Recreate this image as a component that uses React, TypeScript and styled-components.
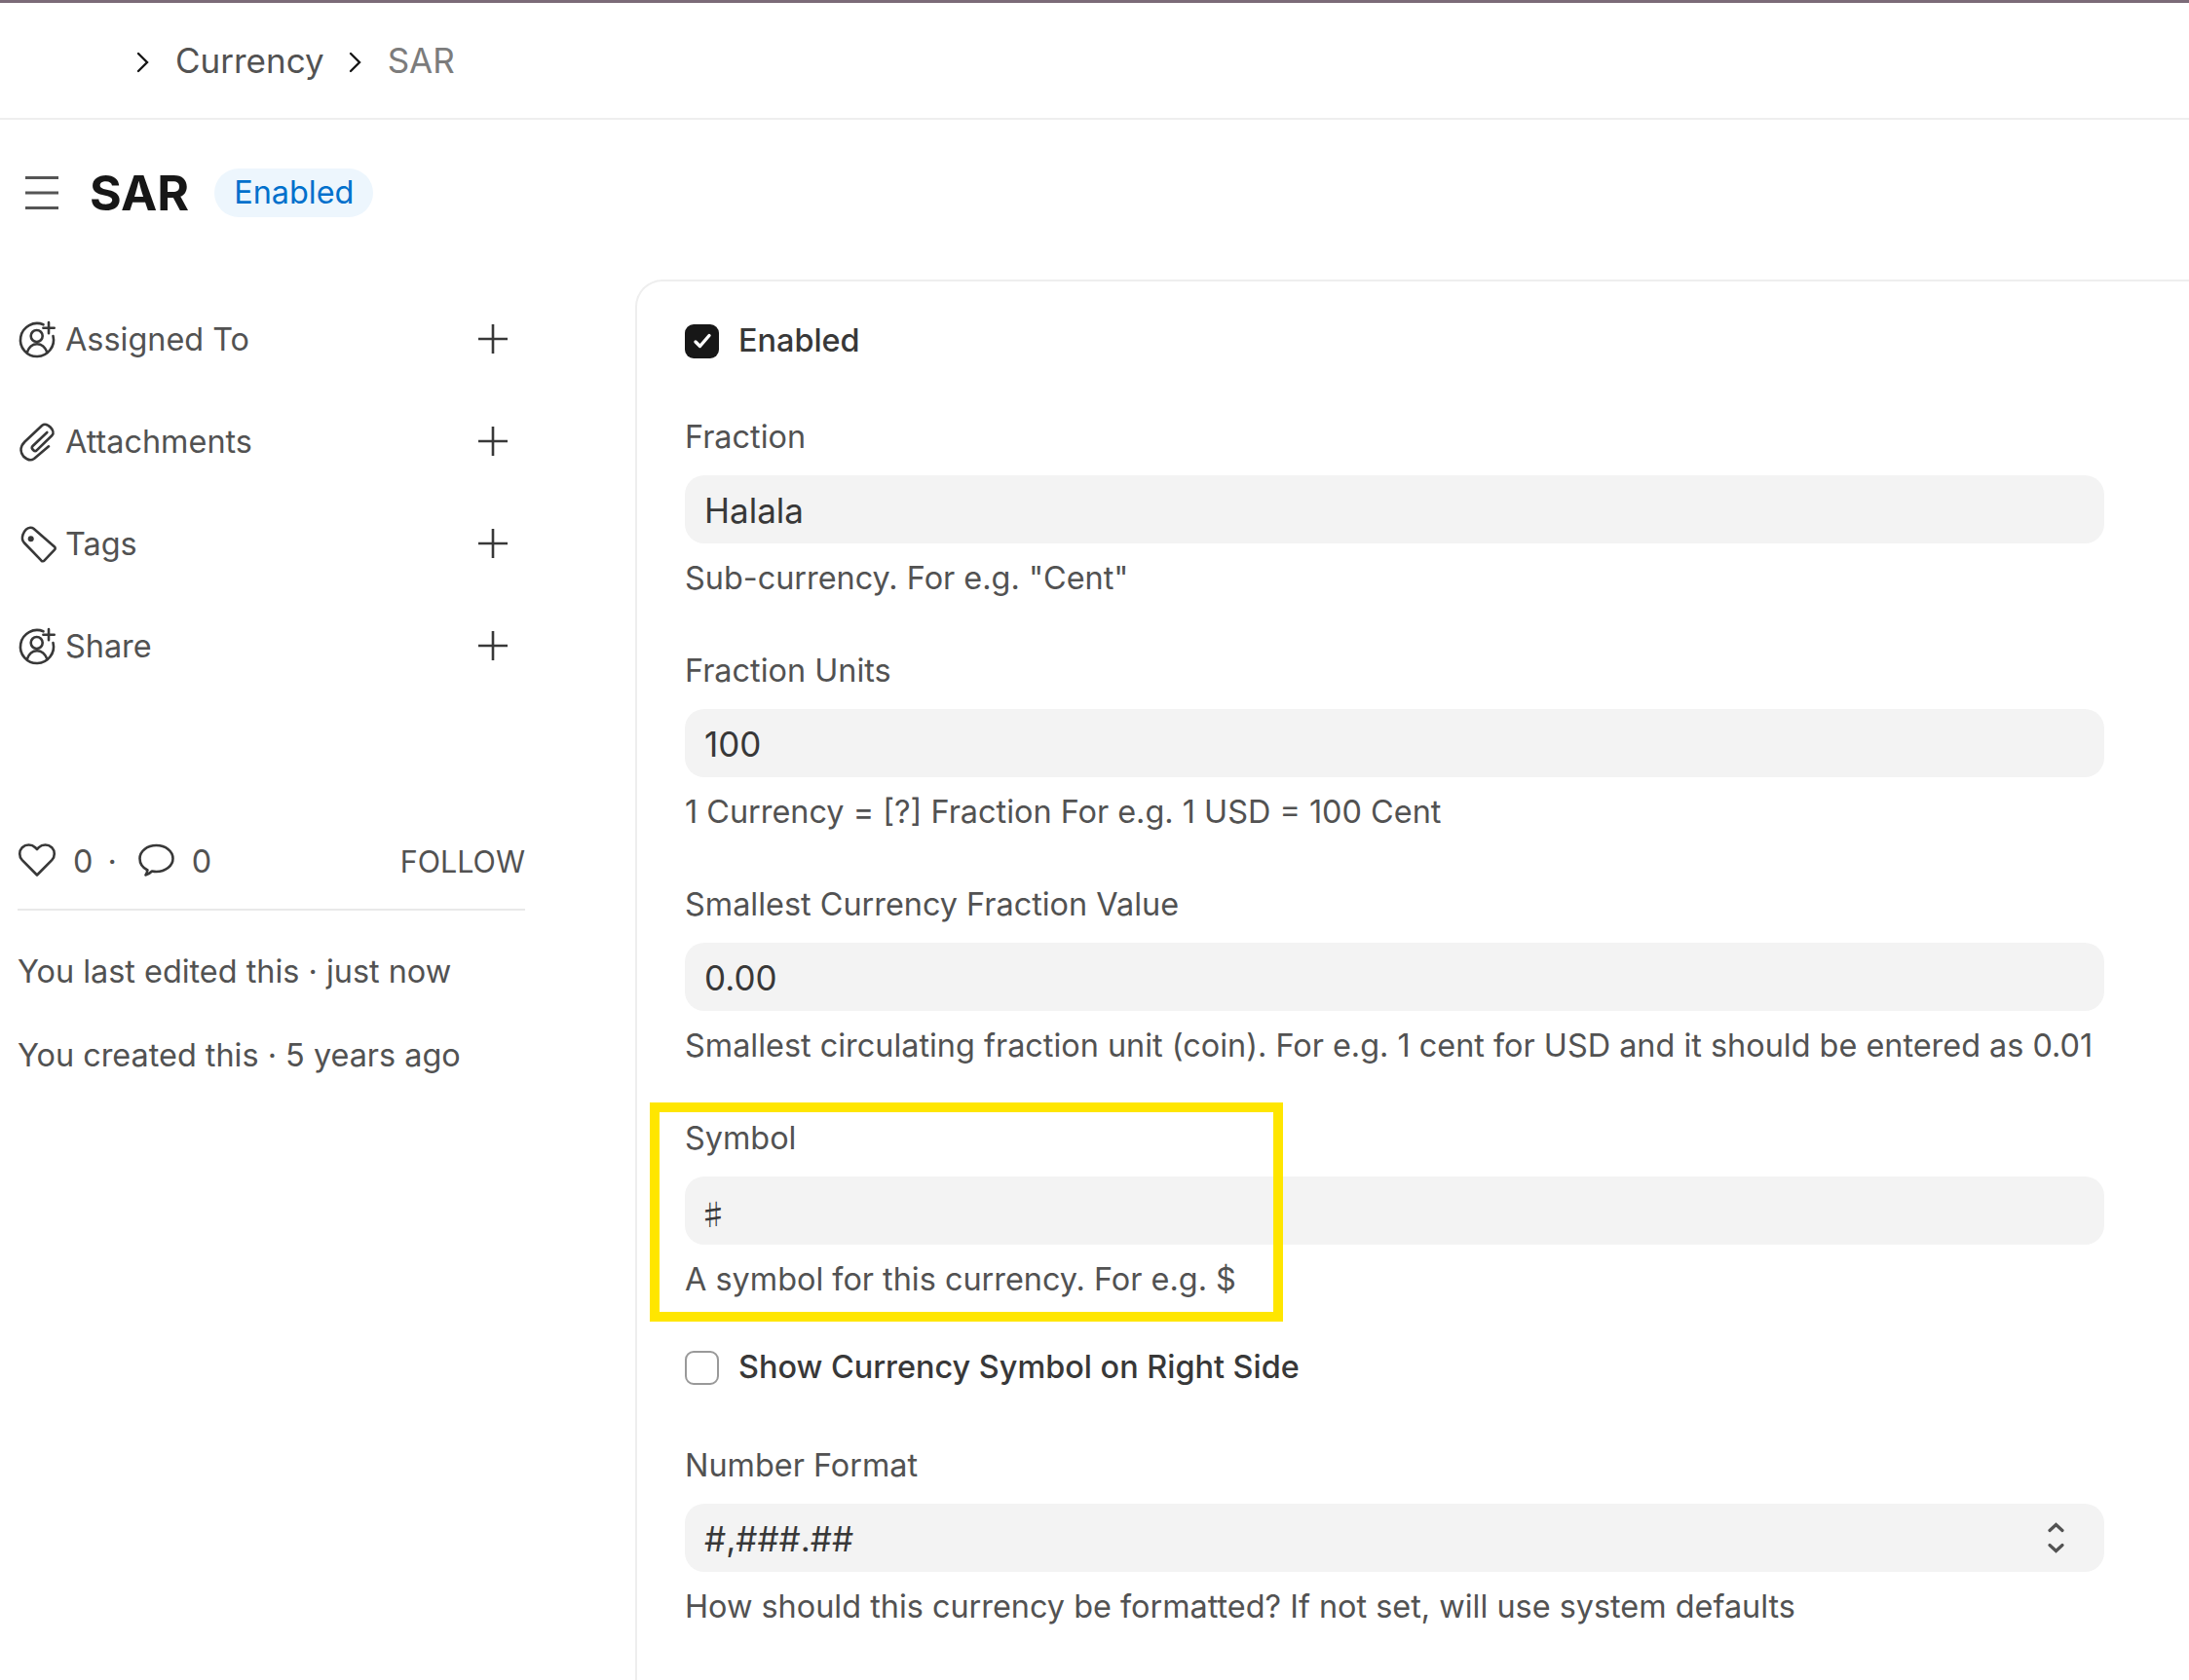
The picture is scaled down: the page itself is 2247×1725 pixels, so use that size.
import React from "react";
import styled, { createGlobalStyle } from "styled-components";

const GlobalStyle = createGlobalStyle`
  html, body {
    margin: 0;
    padding: 0;
    background: #fff;
  }
  * {
    box-sizing: border-box;
  }
`;

const Page = styled.div`
  color: #525252;
  display: flex;
  flex-direction: column;
  font-family: Inter, "Noto Sans", sans-serif;
  font-size: 32.4px;
  height: 1725px;
  line-height: 40px;
  overflow: hidden;
  width: 2247px;
`;

const TopStripe = styled.div`
  background: #7b6b78;
  flex: none;
  height: 3px;
`;

const Navbar = styled.header`
  align-items: center;
  border-bottom: 2px solid #eeeeee;
  display: flex;
  flex: none;
  height: 120px;
  padding-left: 140px;
`;

const Crumb = styled.span<{ $current?: boolean }>`
  color: ${(p) => (p.$current ? "#7c7c7c" : "#525252")};
  font-size: 35px;
  margin-left: 26px;
  margin-right: 25px;
`;

const Chevron = styled.svg`
  fill: none;
  flex: none;
  height: 22px;
  margin-top: 3px;
  stroke: #171717;
  stroke-linecap: round;
  stroke-width: 2.4;
  width: 14px;
`;

const TitleRow = styled.div`
  align-items: center;
  display: flex;
  flex: none;
  height: 50px;
  margin-top: 50px;
  padding-left: 26px;
`;

const Hamburger = styled.svg`
  fill: none;
  flex: none;
  height: 36px;
  stroke: #555555;
  stroke-width: 3;
  width: 34px;
`;

const Title = styled.h1`
  color: #171717;
  font-size: 50px;
  font-weight: 700;
  line-height: 50px;
  margin: 0 26px 0 32px;
`;

const Badge = styled.span`
  background: #edf6fd;
  border-radius: 25px;
  color: #0070cc;
  height: 50px;
  line-height: 50px;
  padding: 0 20px;
`;

const Main = styled.div`
  display: flex;
  flex: 1;
  margin-top: 64px;
  min-height: 0;
`;

const Sidebar = styled.aside`
  flex: none;
  padding-left: 18px;
  padding-top: 41px;
  width: 652px;
`;

const SideRows = styled.div`
  display: flex;
  flex-direction: column;
  gap: 65px;
  width: 503px;
`;

const SideRow = styled.div`
  align-items: center;
  display: flex;
  height: 40px;
  padding-left: 2px;
`;

const SideLabel = styled.span`
  flex: 1;
  margin-left: 11px;
  padding-top: 2px;
`;

const SideIcon = styled.svg<{ $w?: number; $h?: number }>`
  fill: none;
  flex: none;
  height: ${(p) => p.$h || 36}px;
  overflow: visible;
  stroke: #383838;
  stroke-linecap: round;
  stroke-linejoin: round;
  stroke-width: 2.6;
  width: ${(p) => p.$w || 36}px;
`;

const PlusIcon = styled.svg`
  fill: none;
  flex: none;
  height: 30px;
  stroke: #383838;
  stroke-width: 2.6;
  width: 30px;
`;

const LikeRow = styled.div`
  align-items: center;
  border-bottom: 2px solid #e9e9e9;
  display: flex;
  height: 72px;
  margin-top: 180px;
  padding-bottom: 30px;
  padding-left: 1px;
  width: 521px;
`;

const Count = styled.span`
  margin-left: 18px;
  padding-top: 3px;
`;

const Dot = styled.span`
  margin: 0 22px 0 15px;
  padding-top: 3px;
`;

const Follow = styled.span`
  font-size: 30.5px;
  margin-left: auto;
  padding-top: 3px;
`;

const Meta = styled.p<{ $gap: number }>`
  height: 40px;
  line-height: 42px;
  margin: ${(p) => p.$gap}px 0 0;
`;

const Card = styled.main`
  border-left: 2px solid #eeeeee;
  border-top: 2px solid #eeeeee;
  border-top-left-radius: 28px;
  flex: 1;
  padding: 41px 87px 0 49px;
`;

const CheckRow = styled.div<{ $top?: number; $bottom: number }>`
  align-items: center;
  color: #383838;
  display: flex;
  font-weight: 500;
  height: 40px;
  margin-bottom: ${(p) => p.$bottom}px;
  margin-top: ${(p) => p.$top || 0}px;
`;

const CheckBox = styled.span<{ $checked?: boolean }>`
  align-items: center;
  background: ${(p) => (p.$checked ? "#171717" : "#fff")};
  border: ${(p) => (p.$checked ? "none" : "2px solid #999999")};
  border-radius: 9px;
  display: flex;
  flex: none;
  height: 35px;
  justify-content: center;
  margin-right: 20px;
  width: 35px;
`;

const Field = styled.div`
  position: relative;
  & + & {
    margin-top: 55px;
  }
`;

const Label = styled.div`
  height: 40px;
  line-height: 42px;
  margin-bottom: 20px;
`;

const Control = styled.div`
  align-items: center;
  background: #f3f3f3;
  border-radius: 20px;
  color: #383838;
  display: flex;
  font-size: 35px;
  height: 70px;
  justify-content: space-between;
  padding: 1px 41px 0 20px;
`;

const Help = styled.div`
  height: 40px;
  line-height: 42px;
  margin-top: 15px;
  white-space: nowrap;
`;

const Highlight = styled.div`
  border: 10px solid #ffe600;
  height: 225px;
  left: -36px;
  pointer-events: none;
  position: absolute;
  top: -16px;
  width: 650px;
`;

// the installed fonts have no riyal sign, this is the closest glyph they do have
const RiyalGlyph = styled.span`
  font-family: "Noto Sans CJK SC", sans-serif;
  font-size: 30px;
  margin-left: -6px;
  padding-top: 2px;
`;

const SelectArrows = styled.svg`
  fill: none;
  height: 40px;
  margin-top: -1px;
  stroke: #525252;
  stroke-linecap: round;
  stroke-width: 3.2;
  width: 17px;
`;

const CrumbChevron = () => (
  <Chevron viewBox="0 0 14 22">
    <path d="M2 2l9 9-9 9" />
  </Chevron>
);

const Plus = () => (
  <PlusIcon viewBox="0 0 30 30">
    <path d="M15 0v30M0 15h30" />
  </PlusIcon>
);

const UserPlus = () => (
  <SideIcon viewBox="0 0 36 36">
    <path d="M24.500 3.300A17 17 0 1 0 34.500 15" />
    <circle cx="17.700" cy="15" r="6" />
    <path d="M7.700 32c1.800-5.500 5.300-8.800 10.300-8.800s8.500 3.300 10.500 8.800" />
    <path d="M30 1v11.300M24.400 6.700h11.300" />
  </SideIcon>
);

const Clip = () => (
  <SideIcon viewBox="0 0 36 36">
    <path d="M28.300 9 13.300 23.300c-1.800 2.200 2.200 6.200 4.400 4L33.500 12c4-4.500-5-14-10.200-10.300L5.500 18.500C-1 25 2 31 4 33.500c4 4 8 4.500 11 2.500l15-12.700" />
  </SideIcon>
);

const Tag = () => (
  <SideIcon viewBox="0 0 36 36">
    <path d="M14.500 2.800 36 21.500a2 2 0 0 1 .1 2.900L25.400 35.600a2 2 0 0 1-2.900.1L5 17.500C3 15.500 2.500 12 3.500 9 5 5 8 2 11 1.800c1.500-.1 2.500.2 3.500 1z" />
    <circle cx="11.700" cy="13.300" r="3" fill="#383838" stroke="none" />
  </SideIcon>
);

const Heart = () => (
  <SideIcon viewBox="0 0 38 34" $w={38} $h={34}>
    <path d="M19 32.500 3.800 17.200a9.500 9.500 0 0 1 0-13c3.700-3.600 9.700-3.600 13.400 0L19 6l1.800-1.800c3.700-3.600 9.700-3.600 13.400 0a9.500 9.500 0 0 1 0 13z" />
  </SideIcon>
);

const Comment = () => (
  <SideIcon viewBox="0 0 37 34" $w={37} $h={34}>
    <path d="M9.500 27.500C4.500 25 1.500 21 1.500 15.500 1.500 8 9 2 18.500 2s17 6 17 13.500-7.500 13.500-17 13.500c-1.500 0-3-.2-4.500-.5-1.500 1.500-4 3.500-6.500 4 1-1.500 2-3.500 1.500-5z" />
  </SideIcon>
);

interface FormField {
  label: string;
  value: string;
  help: string;
}

const topFields: FormField[] = [
  { label: "Fraction", value: "Halala", help: 'Sub-currency. For e.g. "Cent"' },
  { label: "Fraction Units", value: "100", help: "1 Currency = [?] Fraction For e.g. 1 USD = 100 Cent" },
  {
    label: "Smallest Currency Fraction Value",
    value: "0.00",
    help: "Smallest circulating fraction unit (coin). For e.g. 1 cent for USD and it should be entered as 0.01",
  },
];

const sideItems = [
  { label: "Assigned To", icon: <UserPlus /> },
  { label: "Attachments", icon: <Clip /> },
  { label: "Tags", icon: <Tag /> },
  { label: "Share", icon: <UserPlus /> },
];

const App: React.FunctionComponent = (): JSX.Element => {
  return (
    <Page>
      <GlobalStyle />
      <TopStripe />
      <Navbar>
        <CrumbChevron />
        <Crumb>Currency</Crumb>
        <CrumbChevron />
        <Crumb $current>SAR</Crumb>
      </Navbar>
      <TitleRow>
        <Hamburger viewBox="0 0 34 36">
          <path d="M0 2.500h34M0 18h34M0 33.500h34" />
        </Hamburger>
        <Title>SAR</Title>
        <Badge>Enabled</Badge>
      </TitleRow>
      <Main>
        <Sidebar>
          <SideRows>
            {sideItems.map((item) => (
              <SideRow key={item.label}>
                {item.icon}
                <SideLabel>{item.label}</SideLabel>
                <Plus />
              </SideRow>
            ))}
          </SideRows>
          <LikeRow>
            <Heart />
            <Count>0</Count>
            <Dot>·</Dot>
            <Comment />
            <Count>0</Count>
            <Follow>FOLLOW</Follow>
          </LikeRow>
          <Meta $gap={42}>You last edited this · just now</Meta>
          <Meta $gap={46}>You created this · 5 years ago</Meta>
        </Sidebar>
        <Card>
          <CheckRow $bottom={58}>
            <CheckBox $checked>
              <svg width="20" height="18" viewBox="0 0 20 18" fill="none" stroke="#fff" strokeWidth="3.4" strokeLinecap="round" strokeLinejoin="round">
                <path d="M3 10l4.500 4.500L17 3.500" />
              </svg>
            </CheckBox>
            Enabled
          </CheckRow>
          {topFields.map((field) => (
            <Field key={field.label}>
              <Label>{field.label}</Label>
              <Control>{field.value}</Control>
              <Help>{field.help}</Help>
            </Field>
          ))}
          <Field>
            <Label>Symbol</Label>
            <Control>
              <RiyalGlyph>{"\u266F"}</RiyalGlyph>
            </Control>
            <Help>A symbol for this currency. For e.g. $</Help>
            <Highlight />
          </Field>
          <CheckRow $top={51} $bottom={60}>
            <CheckBox />
            Show Currency Symbol on Right Side
          </CheckRow>
          <Field>
            <Label>Number Format</Label>
            <Control>
              #,###.##
              <SelectArrows viewBox="0 0 17 40">
                <path d="M2 12.500 8.500 6.500 15 12.500M2 27.500l6.500 6 6.500-6" />
              </SelectArrows>
            </Control>
            <Help>How should this currency be formatted? If not set, will use system defaults</Help>
          </Field>
        </Card>
      </Main>
    </Page>
  );
};

export default App;
